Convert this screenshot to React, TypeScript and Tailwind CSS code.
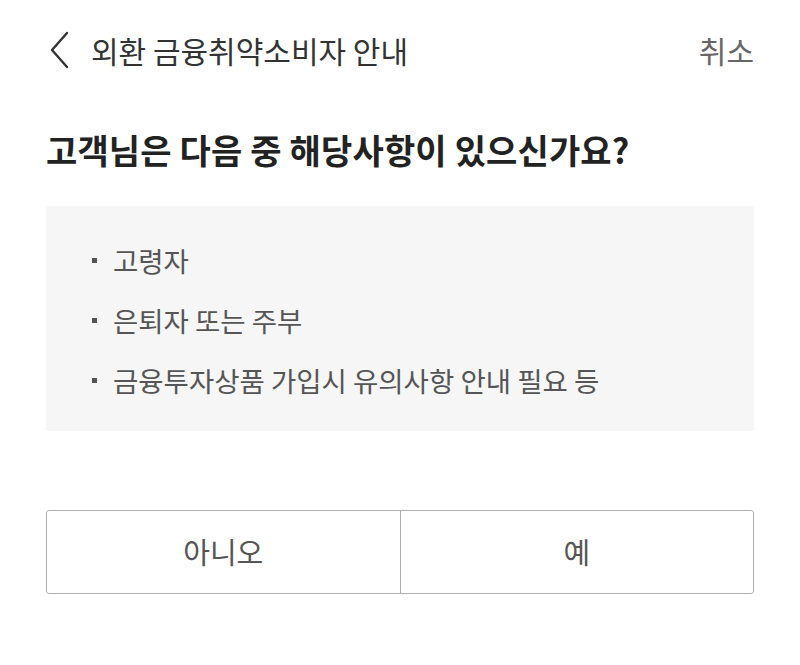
const items = ["고령자", "은퇴자 또는 주부", "금융투자상품 가입시 유의사항 안내 필요 등"];

export default function App() {
  return (
    <div
      className="min-h-[665px] w-[800px] bg-white"
      style={{ fontFamily: '"Noto Sans CJK KR", "Noto Sans", sans-serif' }}
    >
      <header className="flex h-[100px] items-center justify-between px-[46px]">
        <div className="flex items-center gap-[17px]">
          <svg width="30" height="40" viewBox="0 0 30 40" className="-ml-[2px]">
            <path d="M23 3 L8 20 L23 37" fill="none" stroke="#333" strokeWidth="2.4" strokeLinecap="round" strokeLinejoin="round" />
          </svg>
          <span className="text-[30px] leading-none text-[#333]">외환 금융취약소비자 안내</span>
        </div>
        <button type="button" className="text-[30px] leading-none text-[#666]">
          취소
        </button>
      </header>

      <main className="px-[46px]">
        <h1 className="mt-[33px] text-[34px] font-bold leading-none tracking-[0.15px] text-[#222]">
          고객님은 다음 중 해당사항이 있으신가요?
        </h1>

        <div className="mt-[39px] flex h-[225px] flex-col gap-[32px] bg-[#f6f6f7] px-[46px] pt-[40px]">
          {items.map((item) => (
            <div key={item} className="flex items-center gap-[16px]">
              <span className="h-[5px] w-[5px] bg-[#555]" />
              <span className="text-[27.5px] leading-[28px] text-[#555]">{item}</span>
            </div>
          ))}
        </div>

        <div className="mt-[79px] flex h-[84px] overflow-hidden rounded-[3px] border border-[#b0b0b0]">
          <button type="button" className="flex-1 border-r border-[#b0b0b0] text-[29px] text-[#555]">
            아니오
          </button>
          <button type="button" className="flex-1 text-[29px] text-[#555]">
            예
          </button>
        </div>
      </main>
    </div>
  );
}
